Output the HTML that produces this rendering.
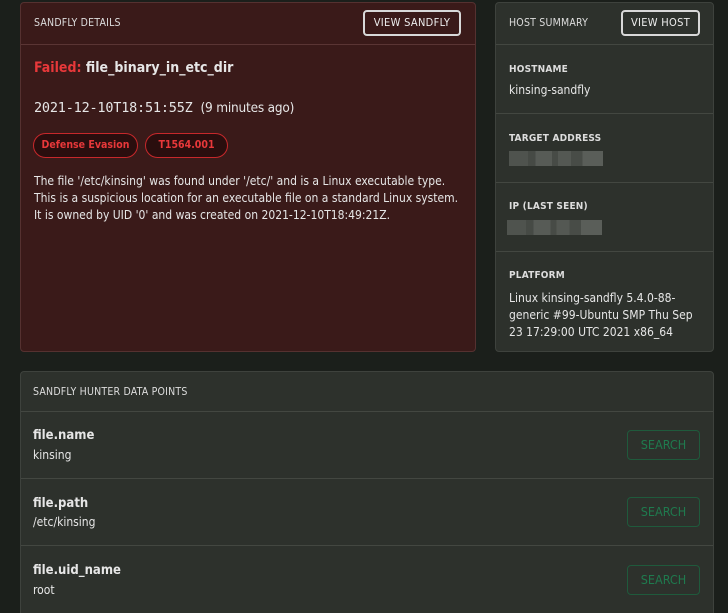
<!DOCTYPE html>
<html><head><meta charset="utf-8"><style>
*{box-sizing:border-box;margin:0;padding:0}
html{width:728px;height:613px;overflow:hidden}
body{width:728px;height:613px;overflow:hidden;background:#1b1f1b;font-family:"DejaVu Sans Condensed","Liberation Sans",sans-serif;color:#e6e6e6;position:relative}
.p{position:absolute;border-radius:4px}
.red{left:20px;top:2px;width:456px;height:350px;background:#3a1a19;border:1px solid #553130}
.gray{background:#2d312c;border:1px solid #3e423d}
.hl{position:absolute;left:0;right:0;height:1px}
.red .hl{background:#5a3534}
.gray .hl{background:#434741}
.t{position:absolute;white-space:nowrap}
.hd{font-size:10.5px;color:#ddd;letter-spacing:.2px}
.btn{position:absolute;border:2px solid #d8d8d8;border-radius:4px;font-size:11px;color:#eee;text-align:center;line-height:21px;letter-spacing:.3px}
.badge{position:absolute;top:130px;height:25px;border:1.5px solid #c7282b;border-radius:13px;background:#2a0e0e;color:#e8383a;font-size:10.5px;font-weight:bold;text-align:center;line-height:22px}
.lbl{font-size:10px;color:#ddd;font-weight:bold;letter-spacing:.2px}
.val{font-size:12px;color:#e6e6e6}
.blur{position:absolute;height:15px;background:linear-gradient(90deg,#4f534e 0 20%,#464a45 20% 28%,#575b56 28% 46%,#474b46 46% 52%,#545853 52% 66%,#484c47 66% 78%,#5a5e59 78%)}
.sb{position:absolute;left:606px;width:73px;height:30px;border:1.5px solid #1f5a3c;border-radius:4px;color:#1f7a4e;font-size:12.5px;text-align:center;line-height:27px}
</style></head><body>
<div class="p red">
 <div class="t hd" style="left:13px;top:14px">SANDFLY DETAILS</div>
 <div class="btn" style="left:342px;top:7px;width:98px;height:26px">VIEW SANDFLY</div>
 <div class="hl" style="top:41px"></div>
 <div class="t" style="left:13px;top:57px;font-size:14px;font-weight:bold"><span style="color:#e8383a">Failed:</span> file_binary_in_etc_dir</div>
 <div class="t" style="left:13px;top:97px;font-size:13.5px;font-family:'DejaVu Sans Mono','Liberation Mono',monospace;letter-spacing:-.2px">2021-12-10T18:51:55Z <span style="font-family:'DejaVu Sans Condensed',sans-serif">(9 minutes ago)</span></div>
 <div class="badge" style="left:12px;width:105px">Defense Evasion</div>
 <div class="badge" style="left:124px;width:83px">T1564.001</div>
 <div class="t" style="left:13px;top:170px;font-size:12px;line-height:17px;color:#e6e6e6">The file '/etc/kinsing' was found under '/etc/' and is a Linux executable type.<br>This is a suspicious location for an executable file on a standard Linux system.<br>It is owned by UID '0' and was created on 2021-12-10T18:49:21Z.</div>
</div>
<div class="p gray" style="left:495px;top:2px;width:219px;height:350px">
 <div class="t hd" style="left:13px;top:14px">HOST SUMMARY</div>
 <div class="btn" style="left:125px;top:7px;width:79px;height:26px">VIEW HOST</div>
 <div class="hl" style="top:41px"></div>
 <div class="t lbl" style="left:13px;top:61px">HOSTNAME</div>
 <div class="t val" style="left:13px;top:80px">kinsing-sandfly</div>
 <div class="hl" style="top:110px"></div>
 <div class="t lbl" style="left:13px;top:130px">TARGET ADDRESS</div>
 <div class="blur" style="left:13px;top:148px;width:94px"></div>
 <div class="hl" style="top:179px"></div>
 <div class="t lbl" style="left:13px;top:198px">IP (LAST SEEN)</div>
 <div class="blur" style="left:11px;top:217px;width:95px"></div>
 <div class="hl" style="top:248px"></div>
 <div class="t lbl" style="left:13px;top:267px">PLATFORM</div>
 <div class="t val" style="left:13px;top:287px;line-height:17px">Linux kinsing-sandfly 5.4.0-88-<br>generic #99-Ubuntu SMP Thu Sep<br>23 17:29:00 UTC 2021 x86_64</div>
</div>
<div class="p gray" style="left:20px;top:371px;width:694px;height:260px">
 <div class="t hd" style="left:12px;top:14px;font-size:10.5px">SANDFLY HUNTER DATA POINTS</div>
 <div class="hl" style="top:39px"></div>
 <div class="t" style="left:12px;top:56px;font-size:13px;font-weight:bold">file.name</div>
 <div class="t val" style="left:12px;top:76px">kinsing</div>
 <div class="sb" style="top:58px">SEARCH</div>
 <div class="hl" style="top:106px"></div>
 <div class="t" style="left:12px;top:124px;font-size:13px;font-weight:bold">file.path</div>
 <div class="t val" style="left:12px;top:143px">/etc/kinsing</div>
 <div class="sb" style="top:125px">SEARCH</div>
 <div class="hl" style="top:173px"></div>
 <div class="t" style="left:12px;top:191px;font-size:13px;font-weight:bold">file.uid_name</div>
 <div class="t val" style="left:12px;top:211px">root</div>
 <div class="sb" style="top:193px">SEARCH</div>
</div>
</body></html>
